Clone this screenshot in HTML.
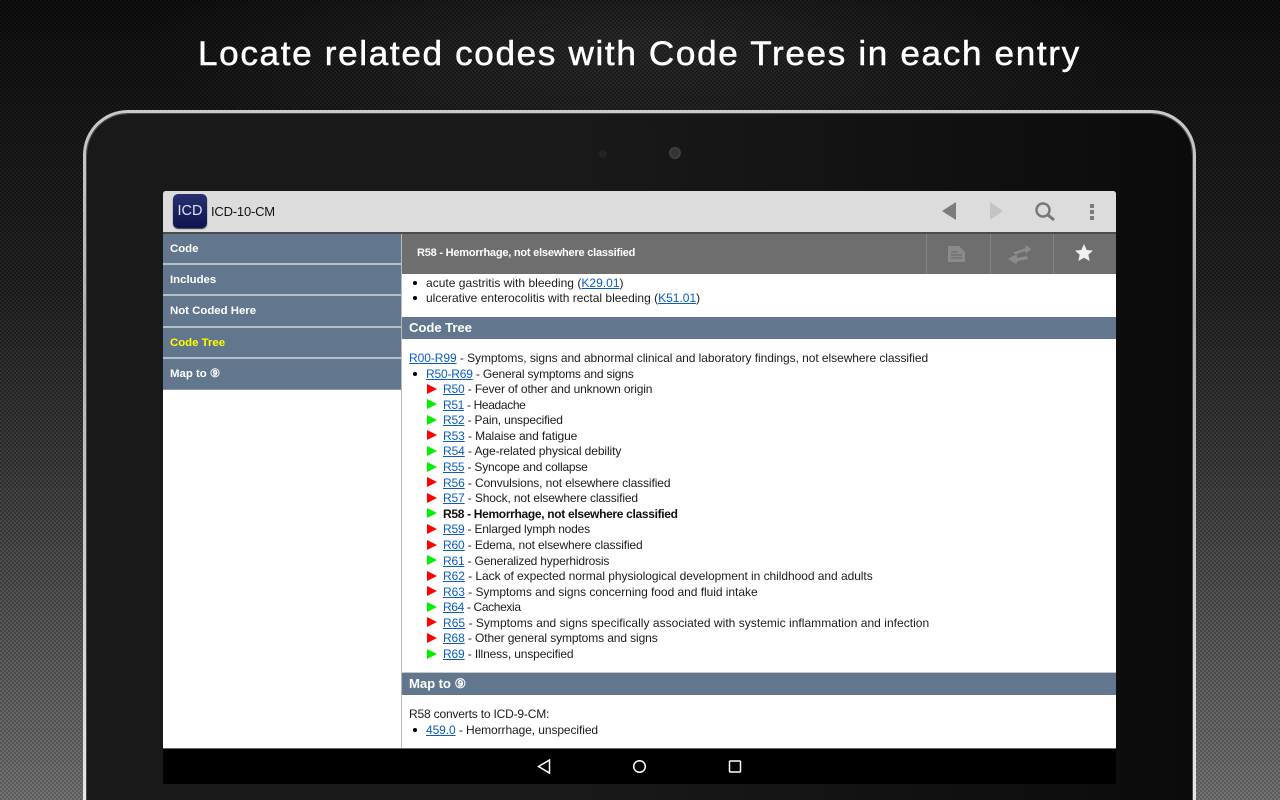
<!DOCTYPE html>
<html><head><meta charset="utf-8"><style>
html,body{margin:0;padding:0;width:1280px;height:800px;overflow:hidden;background:#000}
*{box-sizing:border-box}
body{font-family:"Liberation Sans",sans-serif;position:relative}
.bg{position:absolute;inset:0;background:radial-gradient(ellipse 500px 130px at 640px 40px,rgba(255,255,255,.09),rgba(255,255,255,0)),linear-gradient(to bottom,#090909 0,#111 12%,#1d1d1d 36%,#333 56%,#4d4d4d 75%,#6e6e6e 100%)}
.chk{position:absolute;inset:0;background-image:repeating-conic-gradient(rgba(0,0,0,.16) 0 25%,rgba(255,255,255,.035) 0 50%);background-size:4px 4px}
.title{position:absolute;left:198px;top:33px;font-size:34px;line-height:42px;color:#fff;white-space:nowrap;letter-spacing:1.62px;-webkit-text-stroke:.5px #fff;transform:scaleX(1.0315);transform-origin:0 0}
.device{position:absolute;left:83px;top:110px;width:1113px;height:690px;border-radius:45px 45px 0 0;background:linear-gradient(#c8cbcb,#aeb2b2 30%,#e4e8e8 100%);padding:4px 4px 0 4px}
.inner{width:100%;height:100%;border-radius:41px 41px 0 0;background:linear-gradient(90deg,#191919 0,#191919 45%,#0b0b0b 100%);box-shadow:0 0 0 1px #4a4a4a}
.abs{position:absolute}
.screen{position:absolute;left:163px;top:191px;width:953px;height:593px;background:#fff;border-radius:3px 3px 0 0;overflow:hidden}
.bar{position:absolute;left:0;top:0;width:953px;height:41px;background:#dcdcdc}
.barline{position:absolute;left:0;top:41px;width:953px;height:2px;background:#4c4c4c}
.logo{position:absolute;left:10px;top:3px;width:34px;height:34px;border-radius:5px;background:linear-gradient(#2a3170,#0e1450);box-shadow:0 1px 1px #333;color:#dfe3f5;font-size:14.5px;line-height:34px;text-align:center}
.app{position:absolute;left:48px;top:13px;font-size:13px;line-height:16px;color:#111;letter-spacing:-.2px}
.si{position:absolute;left:0;width:238px;background:#62778e;color:#fff;font-size:11.4px;font-weight:bold;padding-left:7px;border-bottom:2px solid #b5bfc9}
.vl{position:absolute;left:238px;top:43px;width:1px;height:515px;background:#b9b9b9}
.tb{position:absolute;left:239px;top:43px;width:714px;height:40px;background:#6e6e6e;color:#fff;font-size:11px;font-weight:bold;letter-spacing:-.22px;line-height:39px;padding-left:15px}
.dv{position:absolute;top:43px;width:1px;height:40px;background:#848484}
.sec{position:absolute;left:239px;width:714px;height:22px;background:#62778e;color:#fff;font-size:13.2px;letter-spacing:-.1px;font-weight:bold;line-height:21px;padding-left:7px}
.l{position:absolute;font-size:12px;letter-spacing:-.06px;line-height:16px;color:#1c1c1c;white-space:nowrap}
.l a{color:#0b5cc4;text-decoration:underline}
.d{position:absolute;width:4px;height:4px;border-radius:50%;background:#000;left:250px}
.t{position:absolute;left:264px;width:0;height:0;margin-top:-1px;border-left:10px solid;border-top:5px solid transparent;border-bottom:5px solid transparent}
.r{border-left-color:#ff0000}.g{border-left-color:#00f000}
.nav{position:absolute;left:0;top:557px;width:953px;height:36px;background:#000;border-top:1px solid #666}
</style></head><body>
<div class="bg"></div><div class="chk"></div>
<div class="title">Locate related codes with Code Trees in each entry</div>
<div class="device"><div class="inner"></div></div>
<div class="abs" style="left:599px;top:150px;width:8px;height:8px;border-radius:50%;background:#232323"></div>
<div class="abs" style="left:669px;top:147px;width:12px;height:12px;border-radius:50%;background:#333;border:2px solid #3e3e3e"></div>
<div class="screen">
<div class="bar"></div><div class="barline"></div>
<div class="logo">ICD</div><div class="app">ICD-10-CM</div>
<svg class="abs" style="left:770px;top:0" width="183" height="41">
<path d="M9 20 L23 11 V29 Z" fill="#7c7c7c"/>
<path d="M57 11 L70 20 L57 29 Z" fill="#c4c4c4"/>
<circle cx="110" cy="19" r="6.5" fill="none" stroke="#777" stroke-width="2.4"/>
<path d="M115 24 L121 29" stroke="#777" stroke-width="3"/>
<rect x="157" y="13" width="4" height="4" fill="#7c7c7c"/><rect x="157" y="19" width="4" height="4" fill="#7c7c7c"/><rect x="157" y="25" width="4" height="4" fill="#7c7c7c"/>
</svg>
<div class="si" style="top:43px;height:31px;line-height:30px">Code</div>
<div class="si" style="top:74px;height:31px;line-height:30px">Includes</div>
<div class="si" style="top:105px;height:32px;line-height:31px">Not Coded Here</div>
<div class="si" style="top:137px;height:31px;line-height:30px;color:#ffff00">Code Tree</div>
<div class="si" style="top:168px;height:31px;line-height:30px;border-bottom:1px solid #8a9aaa">Map to ⑨</div>
<div class="vl"></div>
<div class="tb">R58 - Hemorrhage, not elsewhere classified</div>
<div class="dv" style="left:763px"></div><div class="dv" style="left:827px"></div><div class="dv" style="left:890px"></div>
<svg class="abs" style="left:780px;top:48px" width="173" height="30">
<path d="M5 7 H16 L22 13 V23 H5 Z" fill="#8a8a8a"/><path d="M8 13 H14 M8 16 H19 M8 19 H19" stroke="#6e6e6e" stroke-width="1.3"/>
<path d="M85 20 L75 22 L73 25 L65 20 L74 14.500 L74 19 L84 17 Z" fill="#8c8c8c"/>
<path d="M70 13 L82 9 L82 5 L89 10 L83 15 L82 12.500 L72 16 Z" fill="#8c8c8c" stroke="#6e6e6e" stroke-width=".8"/>
<path d="M141 5 L143.700 11 L150 11.600 L145.300 15.800 L146.700 22 L141 18.800 L135.300 22 L136.700 15.800 L132 11.600 L138.300 11 Z" fill="#f0f0f0"/>
</svg>
<div class="d" style="top:90px"></div><div class="l" style="left:263px;top:84px;letter-spacing:.02px">acute gastritis with bleeding (<a>K29.01</a>)</div>
<div class="d" style="top:105px"></div><div class="l" style="left:263px;top:99px;letter-spacing:0">ulcerative enterocolitis with rectal bleeding (<a>K51.01</a>)</div>
<div class="sec" style="top:126px">Code Tree</div>
<div class="l" style="left:246px;top:159px"><a>R00-R99</a> - Symptoms, signs and abnormal clinical and laboratory findings, not elsewhere classified</div>
<div class="d" style="top:181px"></div><div class="l" style="left:263px;top:175px;letter-spacing:-.18px"><a>R50-R69</a> - General symptoms and signs</div>
<div class="t r" style="top:194px"></div><div class="l" style="left:280px;top:190px;letter-spacing:-.14px"><a>R50</a> - Fever of other and unknown origin</div>
<div class="t g" style="top:209px"></div><div class="l" style="left:280px;top:206px;letter-spacing:-.35px"><a>R51</a> - Headache</div>
<div class="t g" style="top:225px"></div><div class="l" style="left:280px;top:221px;letter-spacing:-.19px"><a>R52</a> - Pain, unspecified</div>
<div class="t r" style="top:240px"></div><div class="l" style="left:280px;top:237px;letter-spacing:-.1px"><a>R53</a> - Malaise and fatigue</div>
<div class="t g" style="top:256px"></div><div class="l" style="left:280px;top:252px;letter-spacing:-.09px"><a>R54</a> - Age-related physical debility</div>
<div class="t g" style="top:272px"></div><div class="l" style="left:280px;top:268px;letter-spacing:-.21px"><a>R55</a> - Syncope and collapse</div>
<div class="t r" style="top:287px"></div><div class="l" style="left:280px;top:284px;letter-spacing:-.11px"><a>R56</a> - Convulsions, not elsewhere classified</div>
<div class="t r" style="top:303px"></div><div class="l" style="left:280px;top:299px;letter-spacing:-.14px"><a>R57</a> - Shock, not elsewhere classified</div>
<div class="t g" style="top:318px"></div><div class="l" style="left:280px;top:315px;font-weight:bold;color:#111;letter-spacing:-.32px">R58 - Hemorrhage, not elsewhere classified</div>
<div class="t r" style="top:334px"></div><div class="l" style="left:280px;top:330px;letter-spacing:-.2px"><a>R59</a> - Enlarged lymph nodes</div>
<div class="t r" style="top:350px"></div><div class="l" style="left:280px;top:346px;letter-spacing:-.14px"><a>R60</a> - Edema, not elsewhere classified</div>
<div class="t g" style="top:365px"></div><div class="l" style="left:280px;top:362px;letter-spacing:-.19px"><a>R61</a> - Generalized hyperhidrosis</div>
<div class="t r" style="top:381px"></div><div class="l" style="left:280px;top:377px;letter-spacing:-.05px"><a>R62</a> - Lack of expected normal physiological development in childhood and adults</div>
<div class="t r" style="top:396px"></div><div class="l" style="left:280px;top:393px;letter-spacing:-.04px"><a>R63</a> - Symptoms and signs concerning food and fluid intake</div>
<div class="t g" style="top:412px"></div><div class="l" style="left:280px;top:408px;letter-spacing:-.36px"><a>R64</a> - Cachexia</div>
<div class="t r" style="top:427px"></div><div class="l" style="left:280px;top:424px;letter-spacing:.03px"><a>R65</a> - Symptoms and signs specifically associated with systemic inflammation and infection</div>
<div class="t r" style="top:443px"></div><div class="l" style="left:280px;top:439px;letter-spacing:-.11px"><a>R68</a> - Other general symptoms and signs</div>
<div class="t g" style="top:459px"></div><div class="l" style="left:280px;top:455px;letter-spacing:-.14px"><a>R69</a> - Illness, unspecified</div>
<div class="sec" style="top:481px;height:23px;border-top:1px solid #c8c8c8">Map to ⑨</div>
<div class="l" style="left:246px;top:515px;letter-spacing:-.18px">R58 converts to ICD-9-CM:</div>
<div class="d" style="top:537px"></div><div class="l" style="left:263px;top:531px;letter-spacing:-.09px"><a>459.0</a> - Hemorrhage, unspecified</div>
<div class="nav"></div>
<svg class="abs" style="left:360px;top:558px" width="220" height="35">
<path d="M26.500 11 L15.500 17.500 L26.500 24 Z" fill="none" stroke="#fff" stroke-width="1.500"/>
<circle cx="116.500" cy="17.500" r="5.800" fill="none" stroke="#fff" stroke-width="1.500"/>
<rect x="206.500" y="12" width="11" height="11" rx="1" fill="none" stroke="#fff" stroke-width="1.500"/>
</svg>
</div>
</body></html>
